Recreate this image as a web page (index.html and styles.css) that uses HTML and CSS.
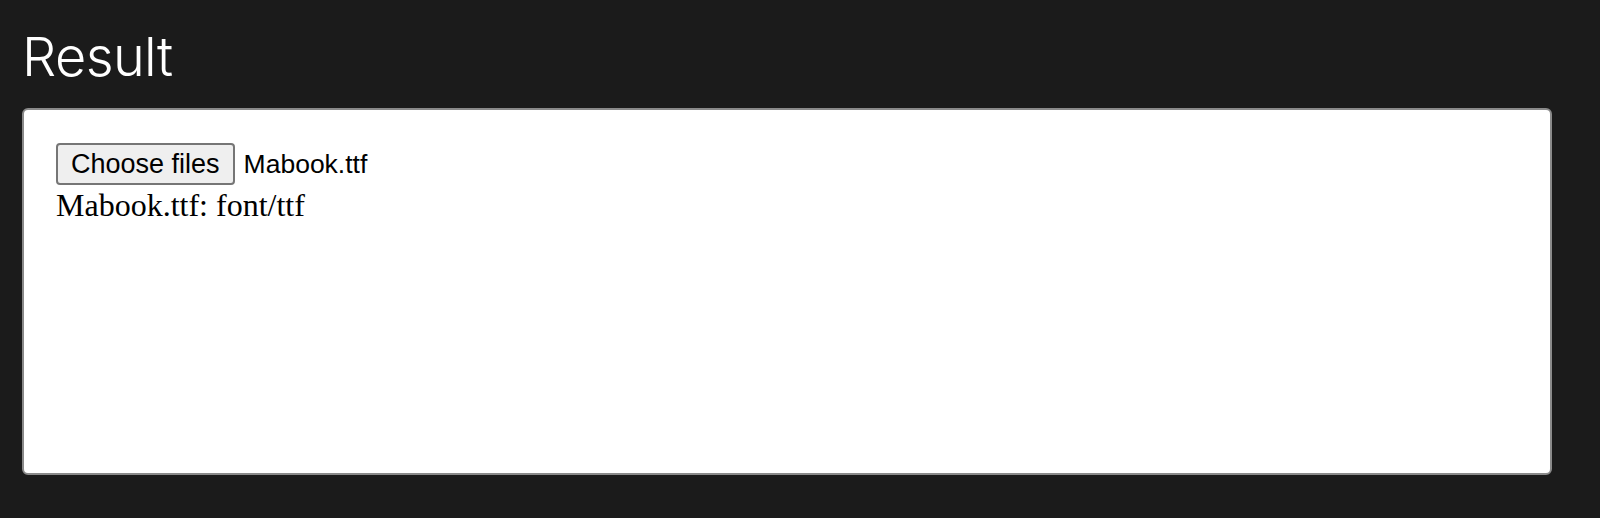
FILE: index.html
```html
<!DOCTYPE html>
<html lang="en">
<head>
<meta charset="utf-8">
<title>Result</title>
<link rel="stylesheet" href="styles.css">
</head>
<body>
<main class="page">
  <h1 class="title">Result</h1>
  <section class="frame">
    <div class="file-row">
      <button class="file-btn" type="button">Choose files</button>
      <span class="file-name">Mabook.ttf</span>
    </div>
    <div class="output">Mabook.ttf: font/ttf</div>
  </section>
</main>
</body>
</html>
```

FILE: styles.css
```css
html, body {
  margin: 0;
  padding: 0;
  background: #1b1b1b;
}
.page {
  padding: 24px 48px 0 22px;
}
.title {
  margin: 0;
  height: 84px;
  font-family: Inter, "Noto Sans", sans-serif;
  font-weight: 300;
  font-size: 54px;
  line-height: 66px;
  color: #ffffff;
  letter-spacing: -0.6px;
}
.frame {
  box-sizing: border-box;
  width: 1530px;
  height: 367px;
  background: #ffffff;
  border: 2px solid #8a8a8a;
  border-radius: 6px;
  padding: 33px 32px;
}
.file-row {
  display: flex;
  align-items: center;
  gap: 9px;
  height: 42px;
}
.file-btn {
  box-sizing: border-box;
  height: 42px;
  padding: 0 13px;
  font-family: "Liberation Sans", Arial, sans-serif;
  font-size: 27px;
  color: #000;
  background: #efefef;
  border: 2px solid #767676;
  border-radius: 4px;
}
.file-name {
  font-family: "Liberation Sans", Arial, sans-serif;
  font-size: 26.5px;
  color: #000;
}
.output {
  font-family: "Liberation Serif", "Times New Roman", serif;
  font-size: 32px;
  line-height: 40px;
  color: #000;
}
```
